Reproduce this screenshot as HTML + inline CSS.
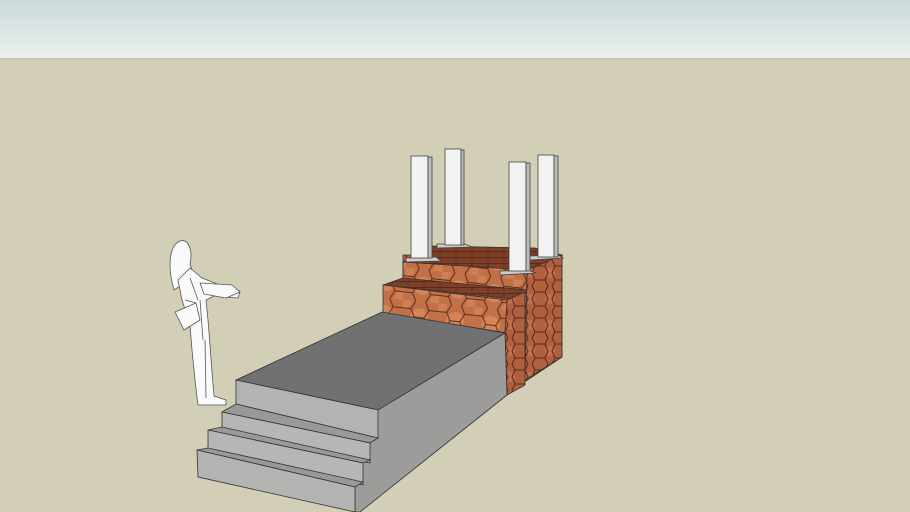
<!DOCTYPE html>
<html><head><meta charset="utf-8"><style>
html,body{margin:0;padding:0;width:910px;height:512px;overflow:hidden;background:#d2cfb6}
svg{display:block}
</style></head><body>
<svg width="910" height="512" viewBox="0 0 910 512" xmlns="http://www.w3.org/2000/svg">
<defs>
<linearGradient id="sky" x1="0" y1="0" x2="0" y2="1">
<stop offset="0" stop-color="#cad9d9"/><stop offset="1" stop-color="#ebefef"/>
</linearGradient>
<pattern id="hex" width="36" height="32" patternUnits="userSpaceOnUse" patternTransform="rotate(6)">
<rect width="36" height="32" fill="#c27048"/>
<circle cx="18" cy="16" r="9" fill="#dc9060" opacity="0.7"/>
<circle cx="0" cy="0" r="9" fill="#dc9060" opacity="0.5"/>
<circle cx="36" cy="32" r="9" fill="#dc9060" opacity="0.5"/>
<path d="M0 8 L9 8 L13 16 L9 24 L0 24 M36 8 L27 8 L23 16 L27 24 L36 24 M9 8 L13 0 M27 8 L23 0 M9 24 L13 32 M27 24 L23 32 M13 16 L23 16" stroke="#5e2e1a" stroke-width="1" fill="none"/>
</pattern>
<pattern id="hexd" width="20" height="26" patternUnits="userSpaceOnUse">
<rect width="20" height="26" fill="#b0603e"/>
<circle cx="10" cy="13" r="5" fill="#c97a50" opacity="0.7"/>
<path d="M0 6 L5 6 L8 13 L5 20 L0 20 M20 6 L15 6 L12 13 L15 20 L20 20 M5 6 L8 0 M15 6 L12 0 M5 20 L8 26 M15 20 L12 26" stroke="#5a2a18" stroke-width="1" fill="none"/>
</pattern>
<pattern id="brk" width="16" height="6" patternUnits="userSpaceOnUse">
<rect width="16" height="6" fill="#7d3f27"/>
<path d="M0 5.5 H16 M8 0 V3" stroke="#4e2414" stroke-width="0.8"/>
</pattern>
</defs>
<rect x="0" y="0" width="910" height="59" fill="url(#sky)"/>
<rect x="0" y="58" width="910" height="2" fill="#c7c8b2"/>

<!-- brick upper block -->
<polygon points="403,255 562,255 562,357 505,395 403,330" fill="url(#hexd)" stroke="#333" stroke-width="0.8"/>
<polygon points="403,262 527,270 527,300 403,283" fill="url(#hex)" stroke="#333" stroke-width="0.8"/>
<polygon points="403,262 432,246 535,248 562,255 527,270" fill="url(#brk)" stroke="#333" stroke-width="0.8"/>
<polygon points="527,270 562,255 562,357 525,380" fill="url(#hexd)" stroke="#333" stroke-width="0.8"/>
<!-- lower brick -->
<polygon points="383,285 403,278 527,290 523,300" fill="url(#brk)" stroke="#333" stroke-width="0.8"/>
<polygon points="383,285 507,300 507,333 383,313" fill="url(#hex)" stroke="#333" stroke-width="0.8"/>
<polygon points="505,333 507,300 525,292 525,385 507,395" fill="url(#hexd)" stroke="#333" stroke-width="0.8"/>

<!-- concrete -->
<polygon points="236,380 382,312 505,333 378,410" fill="#707170" stroke="#333" stroke-width="0.8"/>
<polygon points="378,410 505,333 507,395 360,512 355,512 355,487" fill="#9c9d9a" stroke="#333" stroke-width="0.8"/>
<polygon points="236,380 378,410 378,438 236,404" fill="#b3b4b1" stroke="#333" stroke-width="0.8"/>
<polygon points="222,412 236,404 378,438 370,443" fill="#999a97" stroke="#333" stroke-width="0.8"/>
<polygon points="222,412 370,443 370,463 222,430" fill="#b6b7b4" stroke="#333" stroke-width="0.8"/>
<polygon points="208,430 222,427 370,460 363,463" fill="#999a97" stroke="#333" stroke-width="0.8"/>
<polygon points="208,430 363,463 363,485 208,450" fill="#b6b7b4" stroke="#333" stroke-width="0.8"/>
<polygon points="197,450 208,448 363,482 355,487" fill="#999a97" stroke="#333" stroke-width="0.8"/>
<polygon points="197,450 355,487 355,512 198,477" fill="#b3b4b1" stroke="#333" stroke-width="0.8"/>

<!-- pillars -->
<g stroke="#444" stroke-width="0.8">
<polygon points="437,244 465,244 472,247 437,248" fill="#ccc"/>
<rect x="445" y="149" width="16" height="96" fill="#f2f2f2"/><rect x="461" y="150" width="3" height="95" fill="#bbb"/>
<polygon points="406,258 436,257 441,261 406,262" fill="#ccc"/>
<rect x="411" y="156" width="17" height="102" fill="#f2f2f2"/><rect x="428" y="157" width="4" height="101" fill="#bbb"/>
<polygon points="530,256 558,255 563,258 530,260" fill="#ccc"/>
<rect x="538" y="155" width="16" height="102" fill="#f2f2f2"/><rect x="554" y="156" width="4" height="101" fill="#bbb"/>
<polygon points="500,271 528,270 536,273 500,275" fill="#ccc"/>
<rect x="509" y="162" width="17" height="109" fill="#f2f2f2"/><rect x="526" y="163" width="4" height="108" fill="#bbb"/>
</g>

<!-- person -->
<g fill="#fafafa" stroke="#555" stroke-width="0.8" stroke-linejoin="round">
<path d="M174 290 C168 270 168 246 180 241 C189 238 193 252 190 264 L194 276 L186 282 Z"/>
<path d="M178 280 L190 268 L202 278 L225 287 L240 291 L238 298 L214 296 L206 300 L208 320 L210 345 L212 372 L214 396 L226 400 L226 405 L198 405 L195 380 L192 350 L190 325 L182 300 Z"/>
<path d="M200 283 L232 285 L240 292 L226 298 L204 294 Z"/>
<path d="M175 312 L196 303 L200 320 L184 330 Z"/>
<path d="M185 300 L196 303 M190 278 L198 300"/>
<path d="M200 300 L203 340 M205 340 L206 398"/>
</g>
</svg>
</body></html>
